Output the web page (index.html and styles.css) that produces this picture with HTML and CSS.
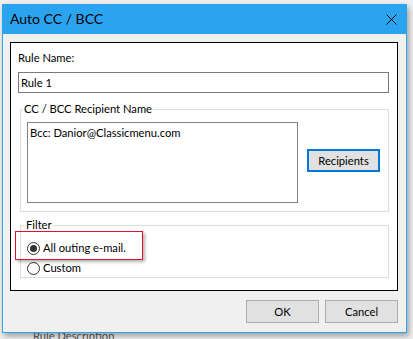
FILE: index.html
```html
<!DOCTYPE html>
<html lang="en">
<head>
    <meta charset="UTF-8">
    <meta name="viewport" content="width=device-width, initial-scale=1.0">
    <title>Auto CC / BCC</title>
    <link rel="stylesheet" href="styles.css">
</head>
<body>
    <div class="dialog">
        <div class="titlebar">
            <span class="title">Auto CC / BCC</span>
            <svg class="close" width="11" height="11" viewBox="0 0 11 11">
                <path d="M0.5 0.5 L10.5 10.5 M10.5 0.5 L0.5 10.5" stroke="#000" stroke-width="1" fill="none"/>
            </svg>
        </div>

        <div class="dialog-body">
            <div class="panel">
                <div class="label">Rule Name:</div>
                <input class="text-input" type="text" value="Rule 1">

                <!-- destinatarios -->
                <fieldset class="group recipients">
                    <legend>CC / BCC Recipient Name</legend>
                    <div class="recipient-row">
                        <textarea class="recipient-list">Bcc: Danior@Classicmenu.com</textarea>
                        <button class="button default">Recipients</button>
                    </div>
                </fieldset>

                <!-- filtro -->
                <fieldset class="group filter">
                    <legend>Filter</legend>
                    <label class="radio"><span class="radio-dot checked"></span>All outing e-mail.</label>
                    <label class="radio"><span class="radio-dot"></span>Custom</label>
                </fieldset>

                <div class="highlight"></div>
            </div>

            <div class="actions">
                <button class="button">OK</button>
                <button class="button">Cancel</button>
            </div>
        </div>
    </div>
    <div class="under">Rule Description</div>
</body>
</html>
```

FILE: styles.css
```css
body {
    margin: 0;
    width: 413px;
    height: 339px;
    overflow: hidden;
    background-color: #f0f0f0;
    font-family: Lato, "Noto Sans", sans-serif;
    font-size: 11.2px;
    line-height: 16px;
    color: #000;
}

.dialog {
    position: relative;
    z-index: 1;
    margin: 4px 0 0 2px;
    width: 405px;
    height: 329px;
    box-sizing: border-box;
    border: 1px solid #2ba4f0;
    border-top: none;
    background-color: #f0f0f0;
    box-shadow: 2px 3px 6px rgba(0, 0, 0, 0.35);
}

.titlebar {
    height: 30px;
    margin: 0 -1px;
    padding: 0 10px 0 8px;
    background-color: #2ba4f0;
    display: flex;
    align-items: center;
    justify-content: space-between;
}

.title {
    font-size: 14px;
}

.close {
    display: block;
    margin-top: 1px;
}

.dialog-body {
    padding: 8px 8px 0 7px;
}

.panel {
    position: relative;
    height: 249px;
    box-sizing: border-box;
    border: 1px solid #000;
    background-color: #fff;
    padding: 7px 8px 0 7px;
}

.label {
    height: 16px;
}

.text-input {
    display: block;
    margin: 6px 0 0 0;
    width: 371px;
    height: 21px;
    box-sizing: border-box;
    border: 1px solid #7a7a7a;
    padding: 0 2px;
    font: inherit;
    color: #000;
    outline: none;
}

.group {
    margin: 0 0 0 2px;
    width: 369px;
    box-sizing: border-box;
    border: 1px solid #dcdcdc;
    padding: 0;
}

.group legend {
    padding: 0 1px;
    margin-left: 2px;
    line-height: 16px;
}

.recipients {
    margin-top: 8px;
    padding: 5px 0 8px 0;
}

.recipient-row {
    display: flex;
    align-items: flex-start;
    margin-left: 6px;
}

.recipient-list {
    width: 271px;
    height: 81px;
    box-sizing: border-box;
    border: 1px solid #828282;
    padding: 2px 2px;
    font: inherit;
    color: #000;
    resize: none;
    overflow: hidden;
    outline: none;
}

.button {
    width: 73px;
    height: 23px;
    box-sizing: border-box;
    padding: 0;
    border: 1px solid #adadad;
    background-color: #e1e1e1;
    font: inherit;
    color: #000;
}

.button.default {
    border: 2px solid #0078d7;
    margin: 27px 0 0 9px;
}

.filter {
    margin-top: 5px;
    padding: 7px 0 1px 0;
}

.filter legend {
    margin-left: 4px;
}

.radio {
    display: flex;
    align-items: center;
    height: 16px;
    margin-left: 6px;
}

.radio + .radio {
    margin-top: 4px;
}

.radio-dot {
    width: 13px;
    height: 13px;
    box-sizing: border-box;
    border: 1px solid #333;
    border-radius: 50%;
    background-color: #fff;
    margin-right: 3px;
    display: flex;
    align-items: center;
    justify-content: center;
}

.radio-dot.checked::after {
    content: "";
    width: 7px;
    height: 7px;
    border-radius: 50%;
    background-color: #333;
}

/* marca roja encima del primer filtro */
.highlight {
    position: absolute;
    left: 4px;
    top: 188px;
    width: 128px;
    height: 29px;
    box-sizing: border-box;
    border: 1px solid #e2102c;
    box-shadow: 2px 2px 3px rgba(0, 0, 0, 0.3);
}

.actions {
    display: flex;
    justify-content: flex-end;
    gap: 6px;
    margin: 9px 0 0 0;
}

.under {
    height: 6px;
    overflow: hidden;
    padding-left: 33px;
    line-height: 6px;
    color: #555;
}
```
